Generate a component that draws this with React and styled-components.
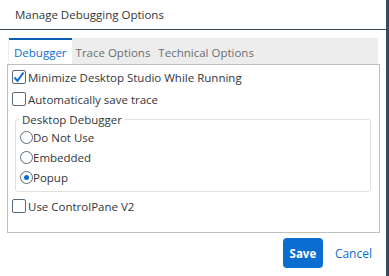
import React from "react";
import styled, { createGlobalStyle } from "styled-components";

const Global = createGlobalStyle`
  html, body { margin: 0; padding: 0; background: #fff; }
  body { font-family: "Open Sans", "Noto Sans", sans-serif; color: #32363a; }
  * { box-sizing: border-box; }
`;

const Dialog = styled.div`
  width: 389px;
  height: 276px;
  background: #fff;
  border-right: 3px solid #354a5f;
  display: flex;
  flex-direction: column;
`;

const Header = styled.div`
  height: 30px;
  border-bottom: 1px solid #3d4a57;
  display: flex;
  align-items: center;
  padding-left: 15px;
  font-size: 11.5px;
  color: #32363a;
`;

const Body = styled.div`
  padding: 8px 6px 0 7px;
  display: flex;
  flex-direction: column;
`;

const TabBar = styled.div`
  display: flex;
  height: 26px;
  background: #ededed;
  margin: 0 2px 0 1px;
`;

const Tab = styled.div`
  padding: ${(p) => (p.active ? "0 5px" : "0 4px")};
  display: flex;
  align-items: center;
  font-size: 11.5px;
  color: ${(p) => (p.active ? "#0a6ed1" : "#6a6d70")};
  background: ${(p) => (p.active ? "#fff" : "transparent")};
  border-top: 2px solid ${(p) => (p.active ? "#0a5fb4" : "transparent")};
  margin-left: ${(p) => (p.active ? "1px" : "0")};
`;

const Panel = styled.div`
  border: 1px solid #bfbfbf;
  height: 169px;
  padding: 1px 6px 0 4px;
  display: flex;
  flex-direction: column;
`;

const CheckRow = styled.label`
  display: flex;
  align-items: center;
  height: 22px;
  font-size: 11.5px;
  color: #32363a;
`;

const Box = styled.span`
  width: 14px;
  height: 14px;
  border: 1px solid #5b6b7b;
  border-radius: 2px;
  background: #fff;
  display: flex;
  align-items: center;
  justify-content: center;
  margin-right: 2px;
  flex-shrink: 0;
`;

const Fieldset = styled.fieldset`
  margin: 2px 2px 3px 3px;
  padding: 0 0 4px 4px;
  border: 1px solid #e0e0e0;
  border-radius: 3px;
  min-width: 0;
`;

const Legend = styled.legend`
  font-size: 11.5px;
  padding: 0 3px 0 2px;
  color: #32363a;
`;

const RadioRow = styled.label`
  display: flex;
  align-items: center;
  height: 20px;
  font-size: 11.5px;
  color: #32363a;
`;

const Circle = styled.span`
  width: 13px;
  height: 13px;
  border-radius: 50%;
  border: 1px solid #5b6b7b;
  display: flex;
  align-items: center;
  justify-content: center;
  flex-shrink: 0;
  &::after {
    content: "";
    width: 5px;
    height: 5px;
    border-radius: 50%;
    background: ${(p) => (p.checked ? "#0a6ed1" : "transparent")};
  }
`;

const Footer = styled.div`
  display: flex;
  justify-content: flex-end;
  align-items: center;
  padding: 5px 8px 0 0;
  gap: 12px;
`;

const SaveButton = styled.button`
  height: 30px;
  width: 40px;
  border: none;
  border-radius: 4px;
  background: #0a6ed1;
  color: #fff;
  font-family: inherit;
  font-weight: 700;
  font-size: 11.5px;
  padding: 0;
`;

const LinkButton = styled.button`
  border: none;
  background: none;
  color: #0a6ed1;
  font-family: inherit;
  font-size: 12px;
  padding: 0;
`;

const Check = () => (
  <svg width="12" height="12" viewBox="0 0 12 12">
    <path d="M1.5 6.5 L4.5 9.8 L10.5 1.5" fill="none" stroke="#0a6ed1" strokeWidth="2" />
  </svg>
);

const CheckBox = ({ checked, children }) => (
  <CheckRow>
    <Box>{checked && <Check />}</Box>
    {children}
  </CheckRow>
);

const Radio = ({ checked, children }) => (
  <RadioRow>
    <Circle checked={checked} />
    {children}
  </RadioRow>
);

export default function App() {
  return (
    <>
      <Global />
      <Dialog>
        <Header>Manage Debugging Options</Header>
        <Body>
          <TabBar>
            <Tab active>Debugger</Tab>
            <Tab>Trace Options</Tab>
            <Tab>Technical Options</Tab>
          </TabBar>
          <Panel>
            <CheckBox checked>Minimize Desktop Studio While Running</CheckBox>
            <CheckBox>Automatically save trace</CheckBox>
            <Fieldset>
              <Legend>Desktop Debugger</Legend>
              <Radio>Do Not Use</Radio>
              <Radio>Embedded</Radio>
              <Radio checked>Popup</Radio>
            </Fieldset>
            <CheckBox>Use ControlPane V2</CheckBox>
          </Panel>
          <Footer>
            <SaveButton>Save</SaveButton>
            <LinkButton>Cancel</LinkButton>
          </Footer>
        </Body>
      </Dialog>
    </>
  );
}
